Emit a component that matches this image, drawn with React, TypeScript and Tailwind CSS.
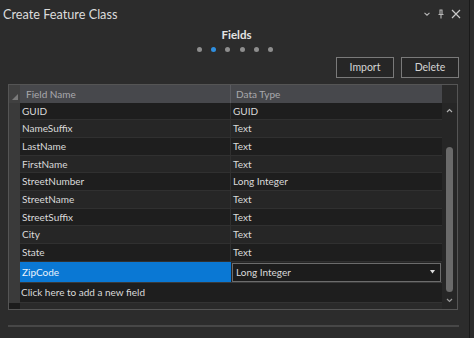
import React from "react";

type Row = { name: string; type: string; h: string; bg: string };

const rows: Row[] = [
  { name: "GUID", type: "GUID", h: "h-[17px]", bg: "bg-[#1e1e1e]" },
  { name: "NameSuffix", type: "Text", h: "h-[18px]", bg: "bg-[#262626]" },
  { name: "LastName", type: "Text", h: "h-[18px]", bg: "bg-[#1e1e1e]" },
  { name: "FirstName", type: "Text", h: "h-[17px]", bg: "bg-[#262626]" },
  { name: "StreetNumber", type: "Long Integer", h: "h-[18px]", bg: "bg-[#1e1e1e]" },
  { name: "StreetName", type: "Text", h: "h-[18px]", bg: "bg-[#262626]" },
  { name: "StreetSuffix", type: "Text", h: "h-[17px]", bg: "bg-[#1e1e1e]" },
  { name: "City", type: "Text", h: "h-[18px]", bg: "bg-[#262626]" },
  { name: "State", type: "Text", h: "h-[18px]", bg: "bg-[#1e1e1e]" },
];

function Dot({ active }: { active?: boolean }) {
  return <div className={active ? "w-[5px] h-[5px] rounded-full bg-[#2f8fe0]" : "w-[5px] h-[5px] rounded-full bg-[#8e8e8e]"} />;
}

export default function App() {
  return (
    <div className="w-[474px] h-[338px] bg-[#2c2c2c] overflow-hidden flex" style={{ fontFamily: "Lato, sans-serif" }}>
      <div className="w-[470px] h-full border-r border-[#1a1a1a] flex flex-col">
        {/* title bar */}
        <div className="h-[28px] flex items-center pl-[3px] pr-[8px]">
          <span className="text-[12.7px] text-[#dcdcdc] leading-none">Create Feature Class</span>
          <div className="ml-auto flex items-center gap-[6px] text-[#b8b8b8]">
            <svg width="8" height="8" viewBox="0 0 8 8"><path d="M1.5 2.8 L4 5.2 L6.5 2.8" stroke="#b8b8b8" strokeWidth="1.1" fill="none" /></svg>
            <svg width="8" height="10" viewBox="0 0 8 10"><path d="M2.5 1 H5.5 M3 1 V5 M5 1 V5 M1.5 5.5 H6.5 M4 5.5 V9.5" stroke="#b8b8b8" strokeWidth="1.1" fill="none" /></svg>
            <svg width="10" height="10" viewBox="0 0 10 10"><path d="M1 1 L9 9 M9 1 L1 9" stroke="#c8c8c8" strokeWidth="1.2" fill="none" /></svg>
          </div>
        </div>
        {/* Fields */}
        <div className="h-[14px] flex justify-center items-center">
          <span className="text-[11.5px] font-bold text-[#e4e4e4] leading-none pl-[4px]">Fields</span>
        </div>
        <div className="mt-[5px] h-[5px] flex justify-center gap-[9.3px] pl-[1px]">
          <Dot />
          <Dot active />
          <Dot />
          <Dot />
          <Dot />
          <Dot />
        </div>
        {/* buttons */}
        <div className="mt-[5px] flex justify-end gap-[7px] pr-[10px]">
          <button className="w-[58px] h-[21px] border border-[#7a7a7a] bg-[#262626] text-[10.5px] text-[#d4d4d4] leading-none">Import</button>
          <button className="w-[58px] h-[21px] border border-[#7a7a7a] bg-[#262626] text-[10.5px] text-[#d4d4d4] leading-none">Delete</button>
        </div>
        {/* table */}
        <div className="mt-[6px] ml-[8px] w-[450px] h-[226px] border border-[#555555] flex text-[10px] text-[#dadada]">
          {/* selector column */}
          <div className="w-[11px] flex flex-col">
            <div className="h-[18px] bg-[#404040] relative">
              <svg className="absolute left-[3px] bottom-[3px]" width="6" height="6" viewBox="0 0 6 6"><path d="M6 0 L6 6 L0 6 Z" fill="#7a7a7a" /></svg>
            </div>
            <div className="h-[200px] bg-[#3a3a3a]" />
            <div className="flex-1 bg-[#1c1c1c]" />
          </div>
          {/* data */}
          <div className="w-[422px] flex flex-col">
            <div className="h-[18px] flex bg-[#47484c] text-[#a9a9ad]">
              <div className="w-[211px] border-r border-[#5a5b60] flex items-center pl-[6px]">Field Name</div>
              <div className="flex-1 flex items-center pl-[5px]">Data Type</div>
            </div>
            {rows.map((r) => (
              <div key={r.name} className={`${r.h} ${r.bg} flex border-b border-[#303030]`}>
                <div className="w-[211px] border-r border-[#303030] flex items-center pl-[2px]">{r.name}</div>
                <div className="flex-1 flex items-center pl-[2px]">{r.type}</div>
              </div>
            ))}
            <div className="h-[21px] flex bg-[#262626] border-b border-[#3a3a3a]">
              <div className="w-[211px] bg-[#0a78d4] flex items-center pl-[2px] text-[#e8f2fc]">ZipCode</div>
              <div className="flex-1 flex items-center pl-[1px] pr-[1px]">
                <div className="w-full h-[19px] border border-[#6c6c6c] bg-[#1c1c1c] flex items-center pl-[3px] pr-[5px]">
                  <span>Long Integer</span>
                  <svg className="ml-auto" width="5" height="4" viewBox="0 0 5 4"><path d="M0 0 H5 L2.5 3.5 Z" fill="#dddddd" /></svg>
                </div>
              </div>
            </div>
            <div className="h-[20px] bg-[#1e1e1e] flex items-center pl-[1px] border-b border-[#333333]">Click here to add a new field</div>
            <div className="flex-1 bg-[#2a2a2a]" />
          </div>
          {/* scrollbar */}
          <div className="w-[15px] flex flex-col bg-[#262626]">
            <div className="h-[18px] bg-[#2a2a2a]" />
            <div className="h-[15px] flex items-center justify-center">
              <svg width="7" height="5" viewBox="0 0 7 5"><path d="M1 4 L3.5 1.5 L6 4" stroke="#b0b0b0" strokeWidth="1.2" fill="none" /></svg>
            </div>
            <div className="h-[29px]" />
            <div className="h-[145px] flex justify-center">
              <div className="w-[7px] h-full rounded-full bg-[#6a6a6a]" />
            </div>
            <div className="flex-1 flex items-center justify-center">
              <svg width="7" height="5" viewBox="0 0 7 5"><path d="M1 1 L3.5 3.5 L6 1" stroke="#9a9a9a" strokeWidth="1.2" fill="none" /></svg>
            </div>
          </div>
        </div>
        {/* bottom line */}
        <div className="mt-[15px] ml-[8px] w-[451px] h-[2px] bg-[#474747]" />
      </div>
    </div>
  );
}
